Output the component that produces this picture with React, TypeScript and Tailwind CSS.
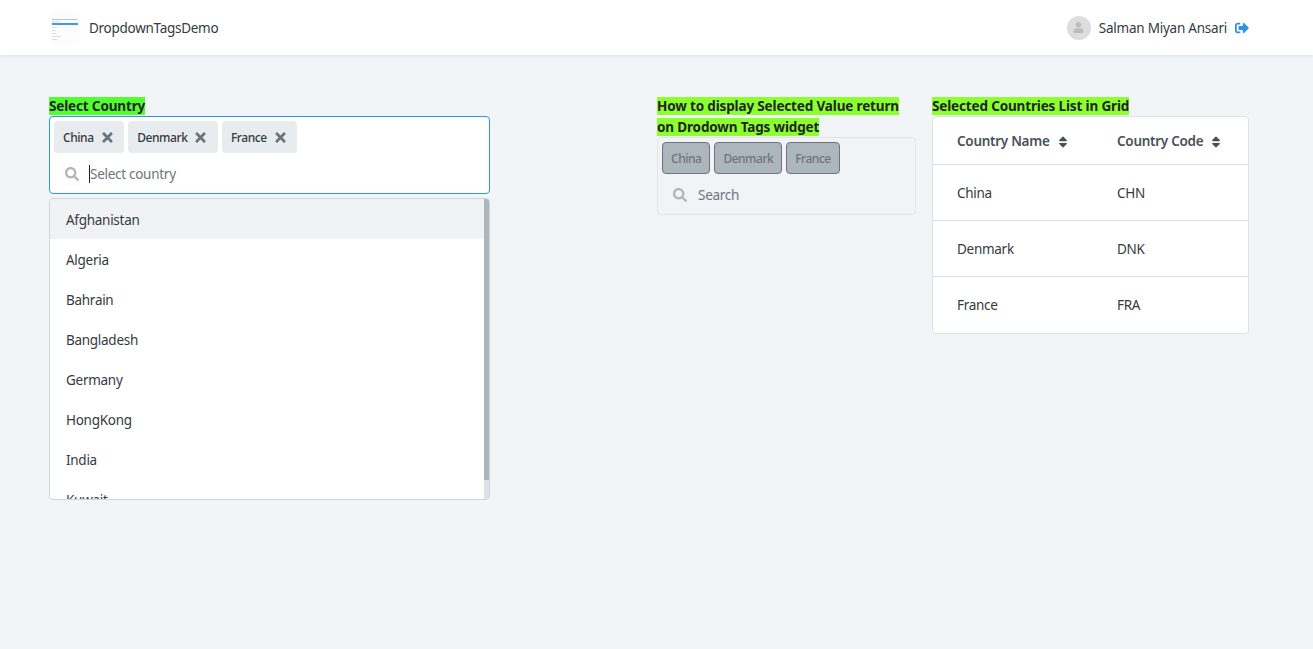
import React from 'react';
import { FaSearch, FaSignOutAlt, FaSort, FaTimes, FaUser } from 'react-icons/fa';

const COUNTRIES = ['Afghanistan', 'Algeria', 'Bahrain', 'Bangladesh', 'Germany', 'HongKong', 'India', 'Kuwait'];
const SELECTED = [
  { name: 'China', code: 'CHN' },
  { name: 'Denmark', code: 'DNK' },
  { name: 'France', code: 'FRA' },
];

function Logo(): React.JSX.Element {
  return (
    <div className="w-8 h-8 rounded-md bg-[#fcfcfc] shrink-0">
      <svg width="32" height="32" viewBox="0 0 32 32">
        <rect x="3" y="7" width="25" height="1" fill="#a9c4e4" />
        <rect x="3" y="11" width="26" height="2" fill="#3d9bea" />
        <rect x="3" y="9" width="9" height="1" fill="#e2e2e2" />
        <rect x="3" y="15" width="5" height="1" fill="#dddddd" />
        <rect x="3" y="18" width="4" height="1" fill="#dddddd" />
        <rect x="3" y="21" width="4" height="1" fill="#dddddd" />
        <rect x="3" y="24" width="9" height="1" fill="#dddddd" />
        <rect x="3" y="27" width="5" height="1" fill="#dddddd" />
      </svg>
    </div>
  );
}

function Heading({ children, color }: { children: React.ReactNode; color: string }): React.JSX.Element {
  return (
    <div className="pt-px -mb-px text-[13.5px] leading-[21px] font-bold tracking-[-0.15px] text-[#212529]">
      <span className={color}>{children}</span>
    </div>
  );
}

export default function App(): React.JSX.Element {
  return (
    <div className="min-h-[649px] bg-[#f1f5f8] font-['Noto_Sans','Open_Sans',sans-serif] text-[13.5px] tracking-[-0.28px] text-[#343a40]">
      {/* Top bar */}
      <header className="h-[55px] bg-white shadow-[0_1px_4px_rgba(0,0,0,0.08)] flex items-center pl-[49px] pr-[64px]">
        <Logo />
        <span className="ml-2 pt-[2px]">DropdownTagsDemo</span>
        <div className="ml-auto flex items-center">
          <div className="w-6 h-6 rounded-full bg-[#dddddd] flex items-center justify-center">
            <FaUser size={11} className="text-[#bdbdbd]" />
          </div>
          <span className="ml-2 pt-[2px] tracking-[-0.23px]">Salman Miyan Ansari</span>
          <FaSignOutAlt size={14} className="ml-2 text-[#2f8fef]" />
        </div>
      </header>

      <main className="flex items-start pt-10 pl-[49px]">
        {/* Dropdown with list open */}
        <section className="w-[441px] shrink-0">
          <Heading color="bg-[#52ff2e]">Select Country</Heading>
          <div className="h-[78px] bg-white border border-[#2f95ea] rounded pl-1 pt-1">
            <div className="flex gap-1">
              {SELECTED.map((c) => (
                <span key={c.name} className="h-8 pl-[9px] pr-[9.5px] pt-[2px] rounded bg-[#e9ecef] flex items-center text-xs font-medium tracking-[-0.42px]">
                  {c.name}
                  <FaTimes size={15} className="ml-[6px] -mt-[2px] text-[#6c757d]" />
                </span>
              ))}
            </div>
            <div className="flex items-center h-[42px] pl-[11px]">
              <FaSearch size={14} className="text-[#adb5bd]" />
              <span className="ml-[10px] w-px h-[18px] bg-[#212529]" />
              <span className="text-[#6c757d]">Select country</span>
            </div>
          </div>
          <div className="relative mt-1 h-[302px] overflow-hidden bg-white border border-[#ced4da] rounded">
            {COUNTRIES.map((c, i) => (
              <div key={c} className={`h-10 flex items-center pl-4 pt-[2px] ${i === 0 ? 'bg-[#f1f2f4]' : ''}`}>
                {c}
              </div>
            ))}
            <div className="absolute top-0 bottom-0 right-0 w-[5px] bg-[#dee2e6]">
              <div className="h-[281px] bg-[#adb5bd]" />
            </div>
          </div>
        </section>

        {/* Disabled widget */}
        <section className="w-[259px] shrink-0 ml-[167px]">
          <Heading color="bg-[#8cff2e]">How to display Selected Value return on Drodown Tags widget</Heading>
          <div className="h-[78px] bg-[#f2f3f6] border border-[#e1e5ea] rounded pl-1 pt-1">
            <div className="flex gap-1">
              {SELECTED.map((c) => (
                <span key={c.name} className="h-8 px-2 pt-[2px] rounded bg-[#adb5bd] border border-[#6c757d] flex items-center text-xs font-medium tracking-[-0.48px] text-[#6c757d]">
                  {c.name}
                </span>
              ))}
            </div>
            <div className="flex items-center h-[42px] pl-[11px] text-[#6c757d]">
              <FaSearch size={14} className="text-[#adb5bd]" />
              <span className="ml-[11px]">Search</span>
            </div>
          </div>
        </section>

        {/* Selected grid */}
        <section className="w-[317px] shrink-0 ml-4">
          <Heading color="bg-[#8cff2e]">Selected Countries List in Grid</Heading>
          <div className="bg-white border border-[#dee2e6] rounded pb-px">
            <div className="h-[47px] grid grid-cols-[160px_1fr] items-center pl-6 pt-[2px] font-semibold text-[#495057]">
              <span className="flex items-center">
                Country Name
                <FaSort size={14} className="ml-[6px]" />
              </span>
              <span className="flex items-center">
                Country Code
                <FaSort size={14} className="ml-[6px]" />
              </span>
            </div>
            {SELECTED.map((c) => (
              <div key={c.code} className="h-14 border-t border-[#dee2e6] grid grid-cols-[160px_1fr] items-center pl-6 pt-[2px]">
                <span>{c.name}</span>
                <span>{c.code}</span>
              </div>
            ))}
          </div>
        </section>
      </main>
    </div>
  );
}
